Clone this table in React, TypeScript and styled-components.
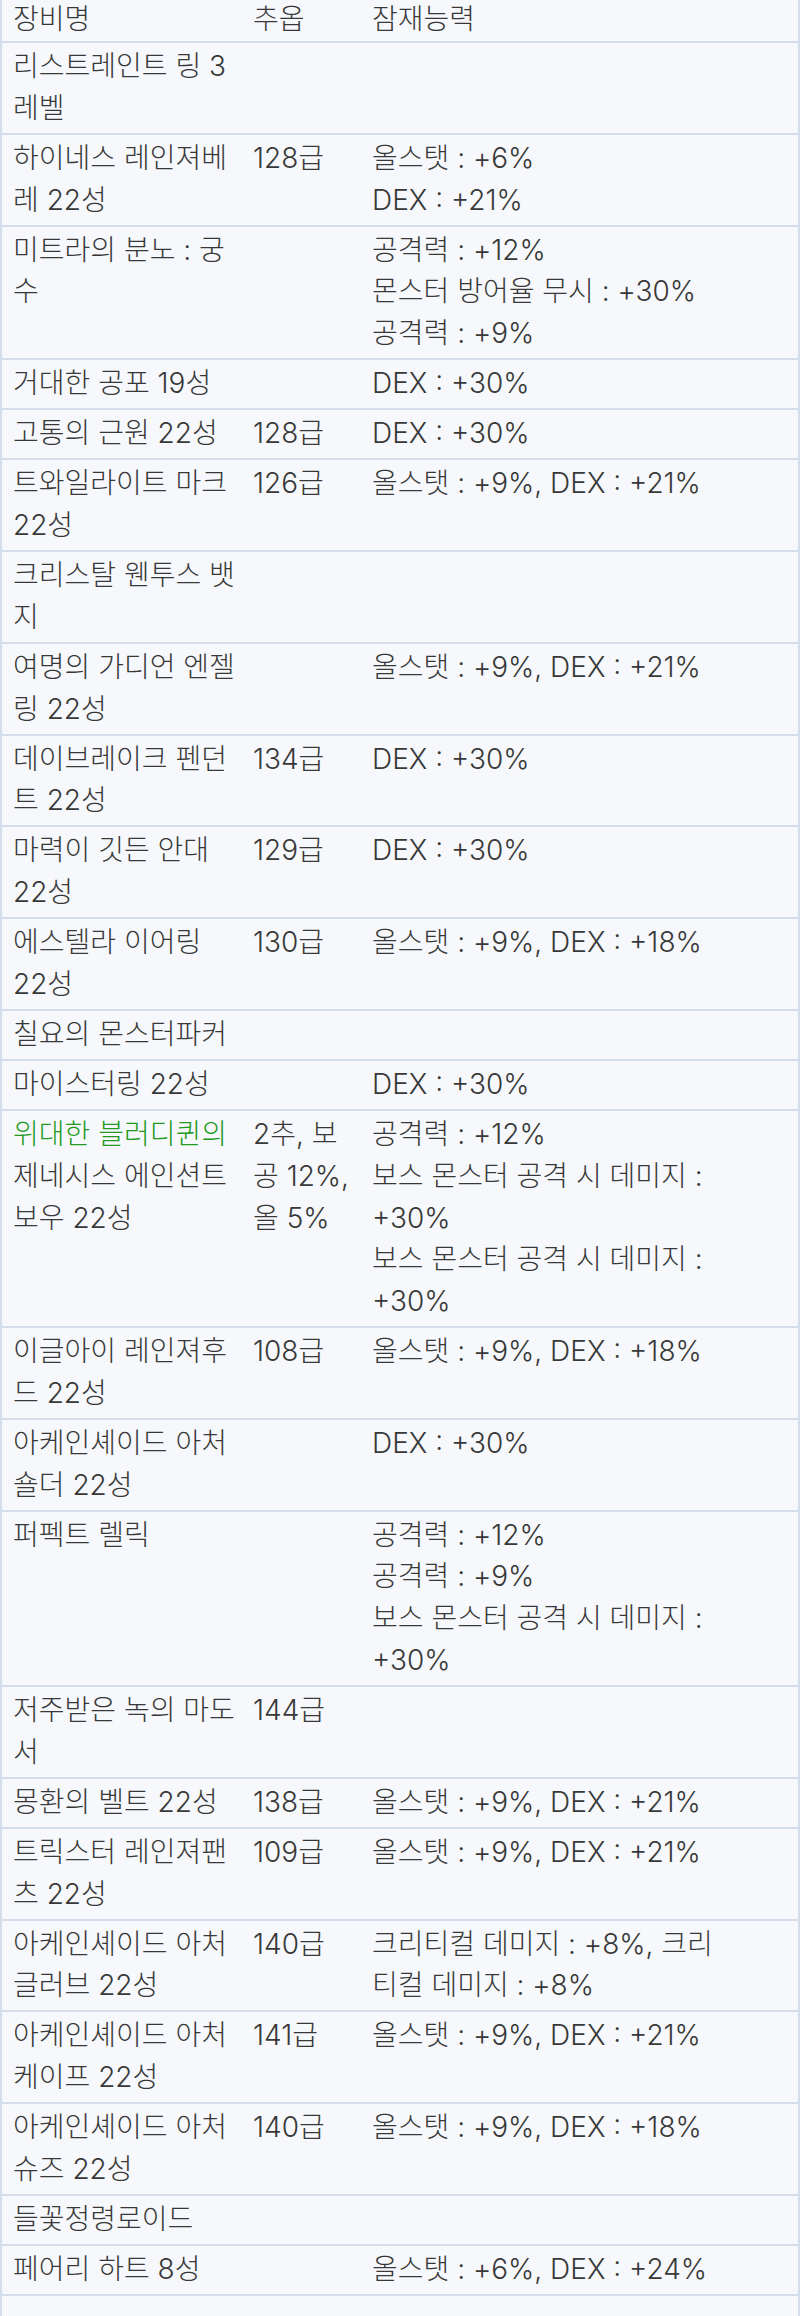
import React from "react";
import styled, { createGlobalStyle } from "styled-components";

const GlobalStyle = createGlobalStyle`
  html, body {
    margin: 0;
    padding: 0;
    background: #f6f8fc;
  }
  body {
    font-family: Inter, "Noto Sans CJK KR", sans-serif;
  }
`;

const Frame = styled.div`
  width: 800px;
  box-sizing: border-box;
  border-left: 2px solid #d5dcea;
  border-right: 2px solid #d5dcea;
  background: #f6f8fc;
`;

const Table = styled.table`
  width: 100%;
  table-layout: fixed;
  border-collapse: collapse;
  font-family: Inter, "Noto Sans CJK KR", sans-serif;
  font-weight: 300;
  font-size: 28px;
  color: #383838;
`;

const Col = styled.col<{ $w?: number }>`
  width: ${(p) => (p.$w ? `${p.$w}px` : "auto")};
`;

const HeadCell = styled.th`
  text-align: left;
  font-weight: 300;
  vertical-align: top;
  white-space: nowrap;
  line-height: 38px;
  padding: 0 0 3px 11px;
  border-bottom: 2px solid #d5dcea;
`;

const Cell = styled.td`
  vertical-align: top;
  white-space: nowrap;
  line-height: 41.7px;
  padding: 3px 0 3.4px 11px;
  border-bottom: 2px solid #d5dcea;
`;

const SpacerCell = styled.td`
  height: 21px;
  padding: 0;
  border-bottom: 2px solid #d5dcea;
`;

const Line = styled.div<{ $accent?: boolean }>`
  color: ${(p) => (p.$accent ? "#229a22" : "inherit")};
`;

type Row = {
  name: string[];
  accentFirst?: boolean;
  extra?: string[];
  pot?: string[];
};

const rows: Row[] = [
  { name: ["리스트레인트 링 3", "레벨"] },
  { name: ["하이네스 레인져베", "레 22성"], extra: ["128급"], pot: ["올스탯 : +6%", "DEX : +21%"] },
  { name: ["미트라의 분노 : 궁", "수"], pot: ["공격력 : +12%", "몬스터 방어율 무시 : +30%", "공격력 : +9%"] },
  { name: ["거대한 공포 19성"], pot: ["DEX : +30%"] },
  { name: ["고통의 근원 22성"], extra: ["128급"], pot: ["DEX : +30%"] },
  { name: ["트와일라이트 마크", "22성"], extra: ["126급"], pot: ["올스탯 : +9%, DEX : +21%"] },
  { name: ["크리스탈 웬투스 뱃", "지"] },
  { name: ["여명의 가디언 엔젤", "링 22성"], pot: ["올스탯 : +9%, DEX : +21%"] },
  { name: ["데이브레이크 펜던", "트 22성"], extra: ["134급"], pot: ["DEX : +30%"] },
  { name: ["마력이 깃든 안대", "22성"], extra: ["129급"], pot: ["DEX : +30%"] },
  { name: ["에스텔라 이어링", "22성"], extra: ["130급"], pot: ["올스탯 : +9%, DEX : +18%"] },
  { name: ["칠요의 몬스터파커"] },
  { name: ["마이스터링 22성"], pot: ["DEX : +30%"] },
  {
    name: ["위대한 블러디퀸의", "제네시스 에인션트", "보우 22성"],
    accentFirst: true,
    extra: ["2추, 보", "공 12%,", "올 5%"],
    pot: [
      "공격력 : +12%",
      "보스 몬스터 공격 시 데미지 :",
      "+30%",
      "보스 몬스터 공격 시 데미지 :",
      "+30%",
    ],
  },
  { name: ["이글아이 레인져후", "드 22성"], extra: ["108급"], pot: ["올스탯 : +9%, DEX : +18%"] },
  { name: ["아케인셰이드 아처", "숄더 22성"], pot: ["DEX : +30%"] },
  {
    name: ["퍼펙트 렐릭"],
    pot: ["공격력 : +12%", "공격력 : +9%", "보스 몬스터 공격 시 데미지 :", "+30%"],
  },
  { name: ["저주받은 녹의 마도", "서"], extra: ["144급"] },
  { name: ["몽환의 벨트 22성"], extra: ["138급"], pot: ["올스탯 : +9%, DEX : +21%"] },
  { name: ["트릭스터 레인져팬", "츠 22성"], extra: ["109급"], pot: ["올스탯 : +9%, DEX : +21%"] },
  {
    name: ["아케인셰이드 아처", "글러브 22성"],
    extra: ["140급"],
    pot: ["크리티컬 데미지 : +8%, 크리", "티컬 데미지 : +8%"],
  },
  { name: ["아케인셰이드 아처", "케이프 22성"], extra: ["141급"], pot: ["올스탯 : +9%, DEX : +21%"] },
  { name: ["아케인셰이드 아처", "슈즈 22성"], extra: ["140급"], pot: ["올스탯 : +9%, DEX : +18%"] },
  { name: ["들꽃정령로이드"] },
  { name: ["페어리 하트 8성"], pot: ["올스탯 : +6%, DEX : +24%"] },
];

export default function App() {
  return (
    <>
      <GlobalStyle />
      <Frame>
        <Table>
          <colgroup>
            <Col $w={240} />
            <Col $w={119} />
            <Col />
          </colgroup>
          <thead>
            <tr>
              <HeadCell>장비명</HeadCell>
              <HeadCell>추옵</HeadCell>
              <HeadCell>잠재능력</HeadCell>
            </tr>
          </thead>
          <tbody>
            {rows.map((r, i) => (
              <tr key={i}>
                <Cell>
                  {r.name.map((t, j) => (
                    <Line key={j} $accent={r.accentFirst && j === 0}>
                      {t}
                    </Line>
                  ))}
                </Cell>
                <Cell>
                  {(r.extra ?? []).map((t, j) => (
                    <Line key={j}>{t}</Line>
                  ))}
                </Cell>
                <Cell>
                  {(r.pot ?? []).map((t, j) => (
                    <Line key={j}>{t}</Line>
                  ))}
                </Cell>
              </tr>
            ))}
            <tr>
              <SpacerCell />
              <SpacerCell />
              <SpacerCell />
            </tr>
          </tbody>
        </Table>
      </Frame>
    </>
  );
}
